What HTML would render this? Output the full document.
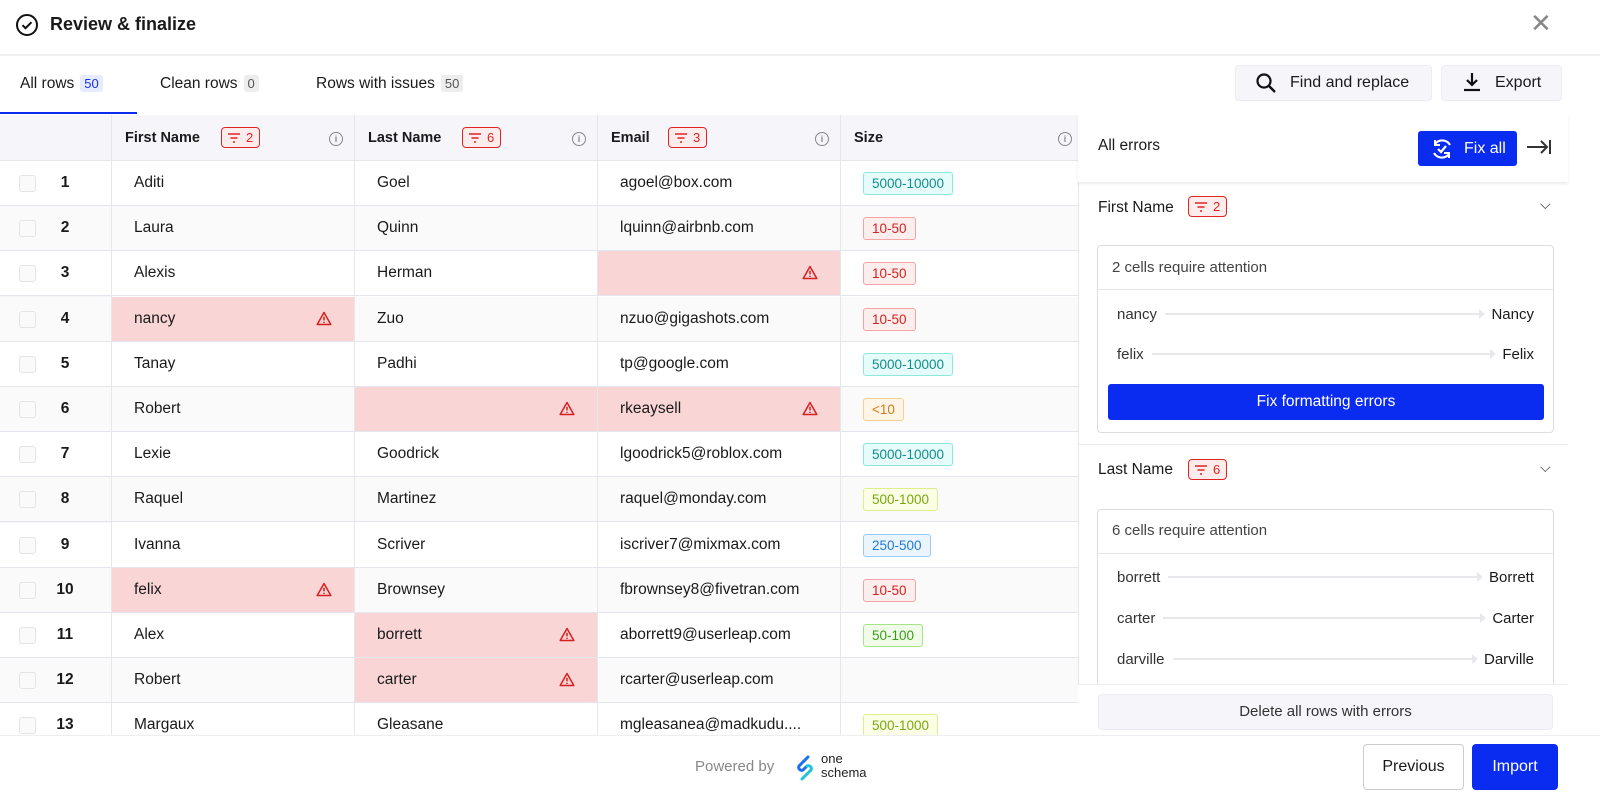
<!DOCTYPE html>
<html><head><meta charset="utf-8"><style>
*{box-sizing:border-box;margin:0;padding:0}
body{width:1600px;height:812px;overflow:hidden;background:#fff;font-family:"Liberation Sans",sans-serif;color:#1a1a1a;position:relative;font-size:15px}
.abs{position:absolute}
.badge{display:inline-block;font-size:13px;padding:1px 4px;border-radius:3px;margin-left:6px}
.filt{position:absolute;height:21px;border:1px solid #e02424;background:#fdecec;color:#e02424;border-radius:4px;font-size:13px;display:flex;align-items:center;padding:0 6px;gap:6px}
.info{position:absolute;width:14px;height:14px;border:1.3px solid #888;border-radius:50%;font-size:9px;color:#888;text-align:center;line-height:12px;font-weight:bold}
.row{position:absolute;left:0;width:1078px;height:45px;border-bottom:1px solid #e3e6ee}
.cell{position:absolute;top:0;height:44px;line-height:44px;font-size:15.5px;padding-left:23px}
.cb{position:absolute;left:19px;top:14px;width:17px;height:17px;border:1px solid #e4e4e4;border-radius:3px;background:#fafafa}
.num{position:absolute;left:50px;width:30px;text-align:center;top:0;line-height:44px;font-weight:bold;font-size:15.5px}
.err{background:#f9d5d5}
.tag{position:absolute;left:23px;top:11px;height:23px;line-height:21px;padding:0 8px;font-size:13.5px;border-radius:3px;border:1px solid}
.teal{color:#0f8f8f;background:#e6fcfa;border-color:#8ce8dd}
.red{color:#d61f1f;background:#fdeeee;border-color:#f5a3a3}
.org{color:#d47a1a;background:#fff5e6;border-color:#f8cf8e}
.lime{color:#7aa80b;background:#fbffe6;border-color:#dcef8a}
.blue{color:#1f7ad6;background:#ebf5ff;border-color:#9acbf5}
.grn{color:#3c9c1a;background:#f0fce8;border-color:#a6e48a}
.warn{position:absolute;right:22px;top:14px}
.vline{position:absolute;top:115px;height:620px;width:1px;background:#e6e6ec}
.fixrow{position:absolute;left:20px;right:20px;height:20px;font-size:15px;display:flex;align-items:center;color:#333}
.fixrow .ln{flex:1;height:2px;background:#e8e8ec;margin:0 8px;position:relative}
.fixrow .ln:after{content:"";position:absolute;right:-2px;top:-4px;border-left:6px solid #e8e8ec;border-top:5px solid transparent;border-bottom:5px solid transparent}
.fixrow b{font-weight:normal;color:#1a1a1a}
</style></head><body>
<svg class="abs" style="left:15px;top:13px" width="24" height="24" viewBox="0 0 24 24"><circle cx="12" cy="12" r="10" fill="none" stroke="#111" stroke-width="2"/><path d="M7.5 12.2l3 3 6-6" fill="none" stroke="#111" stroke-width="2"/></svg>
<div class="abs" style="left:50px;top:14px;font-size:18px;font-weight:bold">Review &amp; finalize</div>
<div class="abs" style="left:1530px;top:8px;font-size:26px;color:#888;font-weight:300">✕</div>
<div class="abs" style="left:0;top:54px;width:1600px;height:2px;background:#f0f0f3"></div>
<div class="abs" style="left:20px;top:75px;font-size:15.5px">All rows<span class="badge" style="background:#e6ebff;color:#1733e6">50</span></div>
<div class="abs" style="left:160px;top:75px;font-size:15.5px">Clean rows<span class="badge" style="background:#ededed;color:#555">0</span></div>
<div class="abs" style="left:316px;top:75px;font-size:15.5px">Rows with issues<span class="badge" style="background:#ededed;color:#555">50</span></div>
<div class="abs" style="left:0;top:112px;width:137px;height:2px;background:#0a2bf0"></div>
<div class="abs" style="left:1235px;top:65px;width:197px;height:36px;background:#f5f5fa;border:1px solid #ececf3;border-radius:4px;font-size:16px;line-height:34px;padding-left:54px">Find and replace</div>
<svg class="abs" style="left:1255px;top:72px" width="22" height="22" viewBox="0 0 22 22"><circle cx="9" cy="9" r="6.5" fill="none" stroke="#111" stroke-width="2.2"/><path d="M14 14l6 6" stroke="#111" stroke-width="2.4"/></svg>
<div class="abs" style="left:1441px;top:65px;width:121px;height:36px;background:#f5f5fa;border:1px solid #ececf3;border-radius:4px;font-size:16px;line-height:34px;padding-left:53px">Export</div>
<svg class="abs" style="left:1462px;top:71px" width="20" height="22" viewBox="0 0 20 22"><path d="M10 2v12M5 9l5 5 5-5" fill="none" stroke="#111" stroke-width="2.2"/><path d="M2 19h16" stroke="#111" stroke-width="2.2"/></svg>
<div class="abs" style="left:0;top:115px;width:1078px;height:46px;background:#f5f5fa;border-bottom:1px solid #e6e6ec"></div>
<div class="abs" style="left:125px;top:130px;font-weight:bold;font-size:14.5px">First Name</div>
<div class="filt" style="left:221px;top:127px"><svg width="12" height="10"><path d="M0 1h12M2.5 5h7M5 9h2" stroke="#e02424" stroke-width="1.6"/></svg>2</div>
<div class="info" style="left:329px;top:132px">i</div>
<div class="abs" style="left:368px;top:130px;font-weight:bold;font-size:14.5px">Last Name</div>
<div class="filt" style="left:462px;top:127px"><svg width="12" height="10"><path d="M0 1h12M2.5 5h7M5 9h2" stroke="#e02424" stroke-width="1.6"/></svg>6</div>
<div class="info" style="left:572px;top:132px">i</div>
<div class="abs" style="left:611px;top:130px;font-weight:bold;font-size:14.5px">Email</div>
<div class="filt" style="left:668px;top:127px"><svg width="12" height="10"><path d="M0 1h12M2.5 5h7M5 9h2" stroke="#e02424" stroke-width="1.6"/></svg>3</div>
<div class="info" style="left:815px;top:132px">i</div>
<div class="abs" style="left:854px;top:130px;font-weight:bold;font-size:14.5px">Size</div>
<div class="info" style="left:1058px;top:132px">i</div>
<div class="abs" style="left:0;top:161px;width:111px;height:574px;background:#f5f5fa"></div>
<div id="rows"></div>
<div class="vline" style="left:111px"></div><div class="vline" style="left:354px"></div><div class="vline" style="left:597px"></div><div class="vline" style="left:840px"></div>
<script>
var W='<svg class="warn" width="16" height="15" viewBox="0 0 16 15"><path d="M8 1.5L14.8 13.5H1.2Z" fill="none" stroke="#d61f1f" stroke-width="1.5" stroke-linejoin="round"/><path d="M8 5.8v3.6M8 10.8v1.2" stroke="#d61f1f" stroke-width="1.5"/></svg>';
var d=[["Aditi","Goel","agoel@box.com","5000-10000","teal",""],
["Laura","Quinn","lquinn@airbnb.com","10-50","red",""],
["Alexis","Herman","","10-50","red","e"],
["nancy","Zuo","nzuo@gigashots.com","10-50","red","f"],
["Tanay","Padhi","tp@google.com","5000-10000","teal",""],
["Robert","","rkeaysell","<10","org","le"],
["Lexie","Goodrick","lgoodrick5@roblox.com","5000-10000","teal",""],
["Raquel","Martinez","raquel@monday.com","500-1000","lime",""],
["Ivanna","Scriver","iscriver7@mixmax.com","250-500","blue",""],
["felix","Brownsey","fbrownsey8@fivetran.com","10-50","red","f"],
["Alex","borrett","aborrett9@userleap.com","50-100","grn","l"],
["Robert","carter","rcarter@userleap.com","","","l"],
["Margaux","Gleasane","mgleasanea@madkudu....","500-1000","lime",""]];
var h='';d.forEach(function(r,i){var t=161+i*45.2;var bg=i%2?'#fafafa':'#fff';
h+='<div class="row" style="top:'+t+'px;background:'+bg+'"><div class="cb"></div><div class="num">'+(i+1)+'</div>';
var c=[[111,r[0],'f'],[354,r[1],'l'],[597,r[2],'e']];
c.forEach(function(x){var e=r[5].indexOf(x[2])>=0;h+='<div class="cell'+(e?' err':'')+'" style="left:'+x[0]+'px;width:243px">'+x[1]+(e?W:'')+'</div>';});
h+='<div class="cell" style="left:840px;width:238px">'+(r[3]?'<span class="tag '+r[4]+'">'+r[3].replace('<','&lt;')+'</span>':'')+'</div></div>';});
document.getElementById('rows').innerHTML=h;
</script>
<div class="abs" style="left:1078px;top:115px;width:490px;height:620px;background:#fff;border-left:1px solid #e6e6ec"></div>
<div class="abs" style="left:1078px;top:115px;width:490px;height:67px;background:#fff;box-shadow:0 2px 3px rgba(0,0,0,0.08)"></div>
<div class="abs" style="left:1098px;top:137px;font-size:15.5px">All errors</div>
<div class="abs" style="left:1418px;top:131px;width:99px;height:35px;background:#0a2bf0;border-radius:3px;color:#fff;font-size:16px;line-height:35px;padding-left:46px">Fix all</div>
<svg class="abs" style="left:1429px;top:136px" width="26" height="26" viewBox="0 0 26 26"><path d="M6 8A9 9 0 0 1 21 9M20 18A9 9 0 0 1 5 17" fill="none" stroke="#fff" stroke-width="2.2"/><path d="M6 4v5h5M20 22v-5h-5" fill="none" stroke="#fff" stroke-width="2"/><path d="M9 13l3 3 5-6" fill="none" stroke="#fff" stroke-width="2.2"/></svg>
<svg class="abs" style="left:1526px;top:137px" width="26" height="20" viewBox="0 0 26 20"><path d="M1 10h20M15 4l6 6-6 6M24 3v14" fill="none" stroke="#333" stroke-width="2"/></svg>
<div class="abs" style="left:1098px;top:199px;font-size:15.5px">First Name</div>
<div class="filt" style="left:1188px;top:196px"><svg width="12" height="10"><path d="M0 1h12M2.5 5h7M5 9h2" stroke="#e02424" stroke-width="1.6"/></svg>2</div>
<div class="abs" style="left:1540px;top:196px;font-size:14px;color:#333">⌵</div>
<div class="abs" style="left:1097px;top:245px;width:457px;height:188px;border:1.5px solid #ddd;border-radius:4px"></div>
<div class="abs" style="left:1098px;top:289px;width:455px;height:1px;background:#e6e6e6"></div>
<div class="abs" style="left:1112px;top:259px;font-size:15px;color:#444">2 cells require attention</div>
<div class="fixrow" style="left:1117px;right:66px;top:304px">nancy<span class="ln"></span><b>Nancy</b></div>
<div class="fixrow" style="left:1117px;right:66px;top:344px">felix<span class="ln"></span><b>Felix</b></div>
<div class="abs" style="left:1108px;top:384px;width:436px;height:36px;background:#0a2bf0;border-radius:3px;color:#fff;font-size:15.5px;text-align:center;line-height:36px">Fix formatting errors</div>
<div class="abs" style="left:1078px;top:444px;width:490px;height:1px;background:#e6e6ec"></div>
<div class="abs" style="left:1098px;top:461px;font-size:15.5px">Last Name</div>
<div class="filt" style="left:1188px;top:459px"><svg width="12" height="10"><path d="M0 1h12M2.5 5h7M5 9h2" stroke="#e02424" stroke-width="1.6"/></svg>6</div>
<div class="abs" style="left:1540px;top:459px;font-size:14px;color:#333">⌵</div>
<div class="abs" style="left:1097px;top:509px;width:457px;height:200px;border:1.5px solid #ddd;border-radius:4px"></div>
<div class="abs" style="left:1098px;top:553px;width:455px;height:1px;background:#e6e6e6"></div>
<div class="abs" style="left:1112px;top:522px;font-size:15px;color:#444">6 cells require attention</div>
<div class="fixrow" style="left:1117px;right:66px;top:567px">borrett<span class="ln"></span><b>Borrett</b></div>
<div class="fixrow" style="left:1117px;right:66px;top:608px">carter<span class="ln"></span><b>Carter</b></div>
<div class="fixrow" style="left:1117px;right:66px;top:649px">darville<span class="ln"></span><b>Darville</b></div>
<div class="abs" style="left:1078px;top:684px;width:490px;height:51px;background:#fff;border-top:1px solid #eee"></div>
<div class="abs" style="left:1098px;top:694px;width:455px;height:36px;background:#f5f5fa;border:1px solid #ececf3;border-radius:4px;text-align:center;line-height:34px;font-size:15px;color:#333">Delete all rows with errors</div>
<div class="abs" style="left:0;top:735px;width:1600px;height:77px;background:#fff;border-top:1px solid #eee"></div>
<div class="abs" style="left:695px;top:758px;font-size:15px;color:#888">Powered by</div>
<svg class="abs" style="left:794px;top:755px" width="22" height="26" viewBox="0 0 22 26"><path d="M14 2L5 11a3 3 0 0 0 4 4l4-4" fill="none" stroke="#1c6ef2" stroke-width="3" stroke-linecap="round"/><path d="M8 24l9-9a3 3 0 0 0-4-4" fill="none" stroke="#20c4d8" stroke-width="3" stroke-linecap="round"/></svg>
<div class="abs" style="left:821px;top:752px;font-size:13px;line-height:14px;color:#222">one<br>schema</div>
<div class="abs" style="left:1363px;top:744px;width:101px;height:46px;border:1px solid #ccc;border-radius:4px;text-align:center;line-height:44px;font-size:16px">Previous</div>
<div class="abs" style="left:1472px;top:744px;width:86px;height:46px;background:#0a2bf0;border-radius:4px;text-align:center;line-height:46px;font-size:16px;color:#fff">Import</div>
</body></html>
